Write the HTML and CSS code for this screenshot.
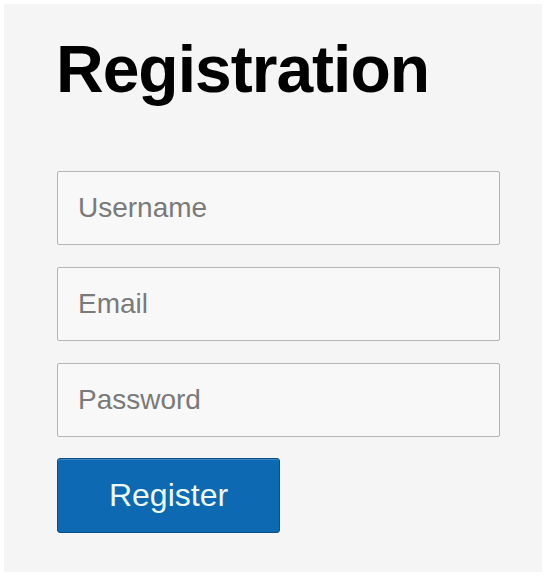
FILE: index.html
```html
<!DOCTYPE html>
<html>
<head>
<meta charset="utf-8">
<link rel="stylesheet" href="styles.css">
</head>
<body>
<div class="panel">
  <h1 class="title">Registration</h1>
  <form class="form">
    <input class="field" type="text" placeholder="Username">
    <input class="field" type="email" placeholder="Email">
    <input class="field" type="password" placeholder="Password">
    <button class="btn" type="button">Register</button>
  </form>
</div>
</body>
</html>
```
FILE: styles.css
```css
html, body {
  margin: 0;
  padding: 0;
  background: #ffffff;
}
body {
  font-family: "Liberation Sans", Arial, sans-serif;
  padding: 4px;
}
.panel {
  width: 538px;
  height: 568px;
  box-sizing: border-box;
  background: #f6f5f5;
  padding: 27px 0 0 53px;
}
.title {
  margin: 0 0 64px -1px;
  font-size: 66px;
  line-height: 76px;
  font-weight: bold;
  letter-spacing: -1px;
  color: #000;
}
.form {
  display: flex;
  flex-direction: column;
  align-items: flex-start;
  gap: 22px;
}
.field {
  width: 443px;
  height: 74px;
  box-sizing: border-box;
  margin: 0;
  border: 1px solid #b3b3b3;
  border-radius: 2px;
  background: #f9f8f8;
  padding: 0 0 0 20px;
  font-family: "Liberation Sans", Arial, sans-serif;
  font-size: 28px;
  color: #333;
  outline: none;
}
.field::placeholder {
  color: #7a7a7a;
  opacity: 1;
}
.btn {
  margin-top: -1px;
  width: 223px;
  height: 75px;
  box-sizing: border-box;
  border: 1px solid #0a4f87;
  border-radius: 3px;
  background: #0d69b1;
  box-shadow: inset 0 1px 0 #3b87c4;
  color: #eef8ff;
  font-family: "Liberation Sans", Arial, sans-serif;
  font-size: 32px;
  padding: 0;
}
```
